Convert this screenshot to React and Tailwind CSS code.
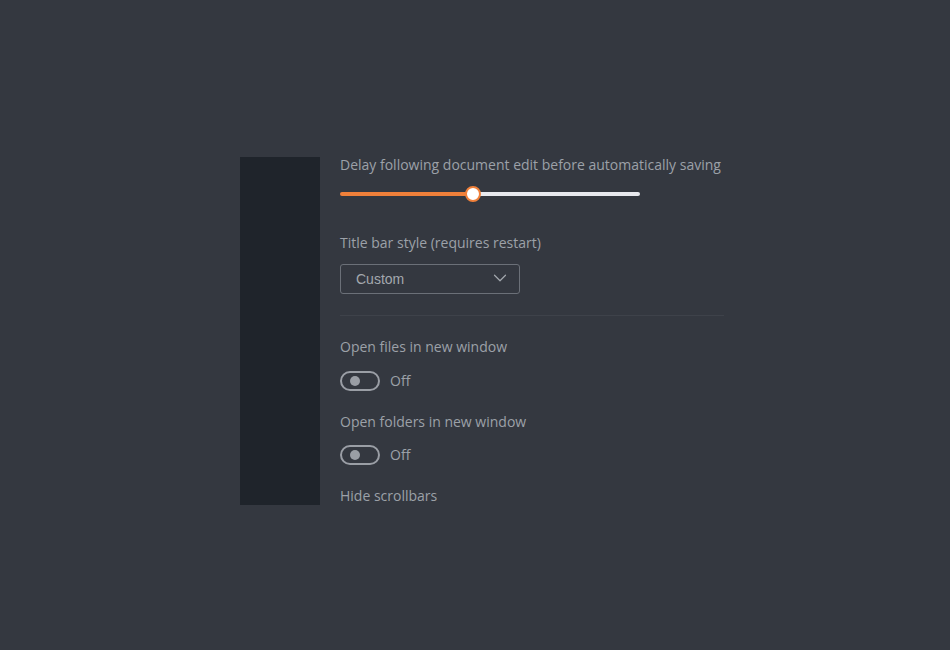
import { ChevronDown } from 'lucide-react'

function Toggle() {
  return (
    <div className="flex items-center gap-[10px] h-[20px]">
      <div className="w-[40px] h-[20px] rounded-full border-2 border-[#9a9ea5] flex items-center pl-[8px]">
        <div className="w-[10px] h-[10px] rounded-full bg-[#9a9ea5]" />
      </div>
      <span className="text-[14px] leading-[20px] text-[#9ca1a8]">Off</span>
    </div>
  )
}

export default function App() {
  const label = 'text-[14px] leading-[19px] text-[#9ca1a8]'
  return (
    <div className="w-[950px] h-[650px] bg-[#343840] pt-[157px] pl-[240px] flex items-start" style={{ fontFamily: '"Open Sans", sans-serif' }}>
      <div className="w-[80px] h-[348px] bg-[#1f242b]" />

      <div className="ml-[20px] w-[384px] -mt-[2px]">
        <p className={label}>Delay following document edit before automatically saving</p>

        {/* slider */}
        <div className="relative w-[300px] h-[16px] mt-[12px] flex items-center">
          <div className="h-[4px] w-[133px] bg-[#f0803a] rounded-l-full" />
          <div className="h-[4px] flex-1 bg-[#e8e9ee] rounded-r-full" />
          <div className="absolute left-[125px] top-0 w-[16px] h-[16px] rounded-full bg-white border-2 border-[#f0803a]" />
        </div>

        <p className={`${label} mt-[31px]`}>Title bar style (requires restart)</p>
        <div className="mt-[12px] w-[180px] h-[30px] rounded-[3px] border border-[#6b7078] flex items-center justify-between pl-[15px] pr-[8px]">
          <span className="text-[14px] text-[#a3a8ae]" style={{ fontFamily: '"Liberation Sans", Arial, sans-serif' }}>Custom</span>
          <ChevronDown size={22} strokeWidth={1.3} className="text-[#a3a8ae] -mt-[2px]" />
        </div>

        <div className="mt-[21px] h-px bg-[#3e424a]" />

        <p className={`${label} mt-[21px]`}>Open files in new window</p>
        <div className="mt-[15px]"><Toggle /></div>

        <p className={`${label} mt-[21px]`}>Open folders in new window</p>
        <div className="mt-[14px]"><Toggle /></div>

        <p className={`${label} mt-[21px]`}>Hide scrollbars</p>
      </div>
    </div>
  )
}
